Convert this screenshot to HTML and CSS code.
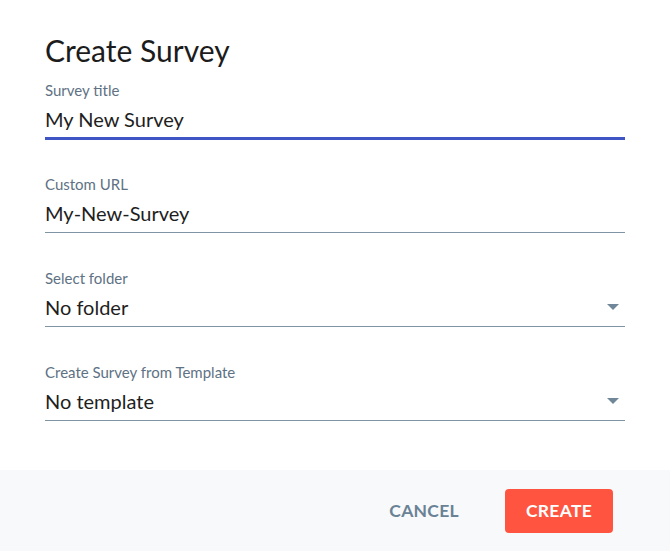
FILE: index.html
```html
<!DOCTYPE html>
<html>
<head>
<meta charset="utf-8">
<link rel="stylesheet" href="styles.css">
</head>
<body>
<div class="dialog">
  <div class="content">
    <h1 class="title">Create Survey</h1>
    <div class="field">
      <div class="label">Survey title</div>
      <div class="control focused"><span class="value">My New Survey</span></div>
    </div>
    <div class="field">
      <div class="label">Custom URL</div>
      <div class="control"><span class="value">My-New-Survey</span></div>
    </div>
    <div class="field">
      <div class="label">Select folder</div>
      <div class="control"><span class="value">No folder</span><span class="caret"></span></div>
    </div>
    <div class="field">
      <div class="label">Create Survey from Template</div>
      <div class="control"><span class="value">No template</span><span class="caret"></span></div>
    </div>
  </div>
  <div class="footer">
    <button class="btn cancel">CANCEL</button>
    <button class="btn create">CREATE</button>
  </div>
</div>
</body>
</html>
```

FILE: styles.css
```css
* { box-sizing: border-box; }
html, body { margin: 0; padding: 0; background: #ffffff; }
body { font-family: Lato, "Open Sans", sans-serif; color: #222; }
.dialog { width: 670px; height: 551px; display: flex; flex-direction: column; }
.content { flex: 1; padding: 32px 45px 0 45px; }
.title { margin: 0 0 13px 0; font-size: 30px; font-weight: 400; line-height: 36px; color: #1c1c1c; }
.field { height: 94px; }
.label { font-size: 15px; line-height: 18px; color: #5e7284; }
.control { display: flex; align-items: center; justify-content: space-between; height: 40px; padding: 8px 0 7px 0; border-bottom: 1px solid #7f95a4; }
.control.focused { border-bottom: 3px solid #3f55c6; height: 41px; padding-bottom: 6px; }
.value { font-size: 20px; line-height: 24px; color: #1e1e1e; }
.caret { width: 0; height: 0; border-left: 6px solid transparent; border-right: 6px solid transparent; border-top: 6px solid #6f8798; margin-right: 6px; }
.footer { height: 81px; background: #f8f9fa; display: flex; align-items: center; justify-content: flex-end; padding-right: 57px; gap: 46px; }
.btn { font-family: Lato, "Open Sans", sans-serif; font-weight: 700; font-size: 17.5px; border: none; background: none; cursor: pointer; letter-spacing: 0.3px; }
.cancel { color: #6a8295; padding: 0; }
.create { background: #ff5540; color: #fff; width: 108px; height: 44px; border-radius: 4px; padding: 0; }
```
